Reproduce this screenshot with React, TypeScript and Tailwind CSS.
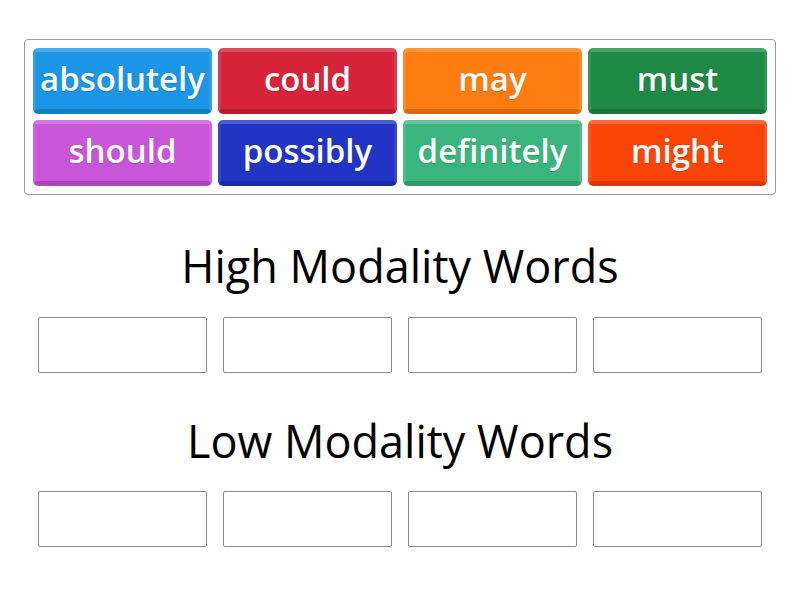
const tiles = [
  { word: "absolutely", bg: "bg-[#1b95e5]" },
  { word: "could", bg: "bg-[#d8243b]" },
  { word: "may", bg: "bg-[#ff7d10]" },
  { word: "must", bg: "bg-[#1f8a45]" },
  { word: "should", bg: "bg-[#c955d9]" },
  { word: "possibly", bg: "bg-[#2234c6]" },
  { word: "definitely", bg: "bg-[#3ab57d]" },
  { word: "might", bg: "bg-[#fb4407]" },
];

const Tile = ({ word, bg }: { word: string; bg: string }) => (
  <div
    className={`${bg} h-[66px] rounded-[5px] border-t-[4px] border-x-[3px] border-b-[5px] border-t-white/20 border-x-white/10 border-b-black/15 flex items-center justify-center pb-[4px] text-white text-[33px] font-semibold leading-none [text-shadow:0_1px_1px_rgba(0,0,0,0.15)]`}
  >
    {word}
  </div>
);

const DropRow = () => (
  <div className="grid grid-cols-4 gap-4 px-[14px]">
    {[0, 1, 2, 3].map((i) => (
      <div key={i} className="h-[56px] border border-[#8a8a8a] rounded-[2px] bg-white" />
    ))}
  </div>
);

export default function App() {
  return (
    <div className="w-[800px] h-[600px] bg-white px-[24px] pt-[39px] font-['Open_Sans',sans-serif] text-black">
      <div className="border border-[#9a9a9a] rounded-[4px] p-2 grid grid-cols-4 gap-[6px]">
        {tiles.map((t) => (
          <Tile key={t.word} word={t.word} bg={t.bg} />
        ))}
      </div>

      <h2 className="mt-[41px] text-[45px] leading-[60px] text-center">High Modality Words</h2>
      <div className="mt-[21px]">
        <DropRow />
      </div>

      <h2 className="mt-[38px] text-[45px] leading-[60px] text-center">Low Modality Words</h2>
      <div className="mt-[20px]">
        <DropRow />
      </div>
    </div>
  );
}
